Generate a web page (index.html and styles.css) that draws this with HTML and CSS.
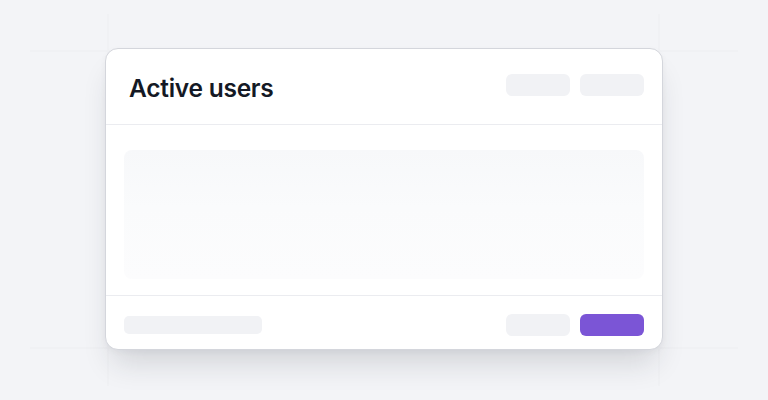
FILE: index.html
```html
<!DOCTYPE html>
<html lang="en">
<head>
<meta charset="utf-8">
<title>Active users</title>
<link rel="stylesheet" href="styles.css">
</head>
<body>
<main class="stage">
  <section class="card">
    <header class="card-header">
      <h1 class="card-title">Active users</h1>
      <div class="header-actions">
        <span class="pill"></span>
        <span class="pill"></span>
      </div>
    </header>
    <div class="card-body">
      <div class="chart-skeleton"></div>
    </div>
    <footer class="card-footer">
      <span class="footer-note"></span>
      <div class="footer-actions">
        <span class="pill"></span>
        <span class="pill pill-primary"></span>
      </div>
    </footer>
  </section>
</main>
</body>
</html>
```
FILE: styles.css
```css
* { box-sizing: border-box; }
html, body { margin: 0; padding: 0; }
body {
  width: 768px;
  height: 400px;
  background-color: #f3f4f7;
  background-image:
    linear-gradient(to right, transparent 30px, #f0f1f4 30px, #f0f1f4 738px, transparent 738px),
    linear-gradient(to right, transparent 30px, #f0f1f4 30px, #f0f1f4 738px, transparent 738px),
    linear-gradient(to bottom, transparent 14px, #f0f1f4 14px, #f0f1f4 386px, transparent 386px),
    linear-gradient(to bottom, transparent 14px, #f0f1f4 14px, #f0f1f4 386px, transparent 386px);
  background-size: 100% 2px, 100% 2px, 2px 100%, 2px 100%;
  background-position: 0 50px, 0 347px, 107px 0, 658px 0;
  background-repeat: no-repeat;
  font-family: Inter, "Noto Sans", "Liberation Sans", sans-serif;
}
.stage {
  width: 768px;
  height: 400px;
  padding-bottom: 2px;
  display: flex;
  align-items: center;
  justify-content: center;
}
.card {
  width: 558px;
  height: 302px;
  background: #ffffff;
  border: 1px solid #d4d6dc;
  border-radius: 13px;
  box-shadow: 0 20px 30px -8px rgba(30, 36, 52, 0.16), 0 2px 6px rgba(30, 36, 52, 0.04);
  display: flex;
  flex-direction: column;
  overflow: hidden;
}
.card-header {
  height: 76px;
  flex: 0 0 76px;
  display: flex;
  align-items: center;
  justify-content: space-between;
  padding: 0 18px 0 22px;
  border-bottom: 1px solid #ebecf0;
}
.card-title {
  margin: 2px 0 0 1px;
  font-size: 24.5px;
  font-weight: 600;
  letter-spacing: -0.01em;
  color: #141925;
}
.header-actions, .footer-actions {
  display: flex;
  gap: 10px;
}
.header-actions {
  margin-bottom: 4px;
}
.pill {
  display: block;
  width: 64px;
  height: 22px;
  border-radius: 6px;
  background: #f1f2f5;
}
.pill-primary {
  background: #7b55d6;
}
.card-body {
  flex: 1 1 auto;
  padding: 25px 18px 16px;
  border-bottom: 1px solid #ebecf0;
  display: flex;
}
.chart-skeleton {
  flex: 1 1 auto;
  border-radius: 8px;
  background: linear-gradient(to bottom, #f7f8fa 0%, #fafbfc 45%, #fcfcfd 100%);
}
.card-footer {
  height: 53px;
  flex: 0 0 53px;
  display: flex;
  align-items: center;
  justify-content: space-between;
  padding: 4px 18px 0;
}
.footer-note {
  display: block;
  width: 138px;
  height: 18px;
  border-radius: 5px;
  background: #f1f2f5;
}
```
